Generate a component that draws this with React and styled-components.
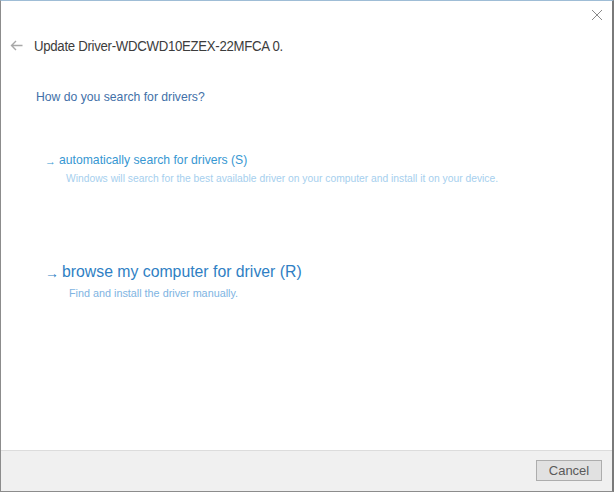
import React from "react";
import styled, { createGlobalStyle } from "styled-components";

const Global = createGlobalStyle`
  html, body { margin: 0; padding: 0; background: #ffffff; }
  body { font-family: "Liberation Sans", Arial, sans-serif; }
  * { box-sizing: border-box; }
`;

const Window = styled.div`
  width: 614px;
  height: 492px;
  display: flex;
  flex-direction: column;
  background: #ffffff;
  border-top: 1px solid #9fbdd6;
  border-left: 1px solid #8c8c8c;
  border-right: 2px solid #7a7a7a;
  border-bottom: 1px solid #8c8c8c;
`;

const CaptionBar = styled.div`
  height: 29px;
  display: flex;
  justify-content: flex-end;
  align-items: center;
  padding-right: 8px;
`;

const CloseButton = styled.button`
  width: 14px;
  height: 14px;
  padding: 0;
  border: 0;
  background: transparent;
  display: flex;
  align-items: center;
  justify-content: center;
  margin-top: -2px;
`;

const Header = styled.div`
  display: flex;
  align-items: center;
  height: 30px;
  padding-left: 9px;
  gap: 11px;
`;

const BackArrow = styled.span`
  display: flex;
  align-items: center;
  width: 13px;
`;

const Title = styled.h1`
  margin: 0;
  font-size: 13.2px;
  font-weight: normal;
  color: #3c3c3c;
  letter-spacing: -0.28px;
  transform: scaleY(1.12);
`;

const Content = styled.div`
  display: flex;
  flex-direction: column;
  padding-left: 35px;
  padding-top: 30px;
`;

const Question = styled.div`
  font-size: 12.2px;
  color: #4270a8;
`;

const Option = styled.div`
  display: flex;
  flex-direction: column;
  margin-top: ${(p) => p.$top}px;
  padding-left: 9px;
`;

const OptionLink = styled.div`
  display: flex;
  align-items: baseline;
  gap: 3px;
  font-size: ${(p) => (p.$large ? 15.8 : 12.2)}px;
  color: ${(p) => (p.$large ? "#2f7fc4" : "#3797d2")};
`;

const Arrow = styled.span`
  font-size: ${(p) => (p.$large ? 14 : 11)}px;
  position: relative;
  top: 1px;
`;

const OptionDesc = styled.div`
  font-size: ${(p) => (p.$large ? 10.8 : 10.3)}px;
  color: ${(p) => (p.$large ? "#7eb4e2" : "#a6cfee")};
  padding-left: ${(p) => p.$indent}px;
  margin-top: 6px;
`;

const Footer = styled.div`
  margin-top: auto;
  height: 41px;
  background: #f0f0f0;
  border-top: 1px solid #dcdcdc;
  display: flex;
  justify-content: flex-end;
  align-items: center;
  padding-right: 10px;
`;

const Button = styled.button`
  width: 66px;
  height: 21px;
  border: 1px solid #adadad;
  background: #e1e1e1;
  color: #5a5a5a;
  font-family: "Liberation Sans", Arial, sans-serif;
  font-size: 13px;
  padding: 0;
  margin-top: -1px;
`;

export default function App() {
  return (
    <>
      <Global />
      <Window>
        <CaptionBar>
          <CloseButton aria-label="Close">
            <svg width="12" height="12" viewBox="0 0 12 12">
              <path d="M1 1 L11 11 M11 1 L1 11" stroke="#8a8a8a" strokeWidth="1" fill="none" />
            </svg>
          </CloseButton>
        </CaptionBar>
        <Header>
          <BackArrow>
            <svg width="13" height="11" viewBox="0 0 13 11">
              <path d="M12.5 5.5 H1.5 M6 1 L1.5 5.5 L6 10" stroke="#a8a8a8" strokeWidth="1.4" fill="none" />
            </svg>
          </BackArrow>
          <Title>Update Driver-WDCWD10EZEX-22MFCA 0.</Title>
        </Header>
        <Content>
          <Question>How do you search for drivers?</Question>
          <Option $top={49}>
            <OptionLink>
              <Arrow>→</Arrow>
              automatically search for drivers (S)
            </OptionLink>
            <OptionDesc $indent={21}>
              Windows will search for the best available driver on your computer and install it on your device.
            </OptionDesc>
          </Option>
          <Option $top={79}>
            <OptionLink $large>
              <Arrow $large>→</Arrow>
              browse my computer for driver (R)
            </OptionLink>
            <OptionDesc $large $indent={24}>
              Find and install the driver manually.
            </OptionDesc>
          </Option>
        </Content>
        <Footer>
          <Button>Cancel</Button>
        </Footer>
      </Window>
    </>
  );
}
